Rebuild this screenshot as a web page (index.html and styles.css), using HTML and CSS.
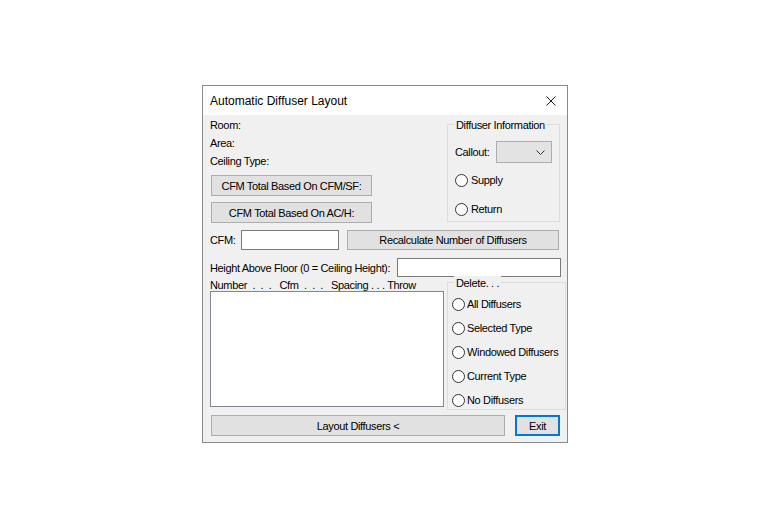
FILE: index.html
```html
<!DOCTYPE html>
<html>
<head>
<meta charset="utf-8">
<title>Automatic Diffuser Layout</title>
<link rel="stylesheet" href="styles.css">
</head>
<body>
<div class="page">
  <div class="dialog">
    <div class="titlebar">
      <span class="title">Automatic Diffuser Layout</span>
      <svg class="close" width="10" height="10" viewBox="0 0 10 10"><path d="M0.5 0.5 L9.5 9.5 M9.5 0.5 L0.5 9.5" stroke="#1a1a1a" stroke-width="1" fill="none"/></svg>
    </div>
    <div class="body">
      <div class="top">
        <div class="left-col">
          <div class="line">Room:</div>
          <div class="line">Area:</div>
          <div class="line">Ceiling Type:</div>
          <div class="btn btn-calc first">CFM Total Based On CFM/SF:</div>
          <div class="btn btn-calc second">CFM Total Based On AC/H:</div>
        </div>
        <div class="group group-info">
          <div class="group-title">Diffuser Information</div>
          <div class="callout-row">
            <span>Callout:</span>
            <div class="combo">
              <svg class="chevron" width="9" height="5" viewBox="0 0 9 5"><path d="M0.5 0.5 L4.5 4.5 L8.5 0.5" stroke="#333" stroke-width="1" fill="none"/></svg>
            </div>
          </div>
          <div class="radio-row supply"><span class="radio"></span><span>Supply</span></div>
          <div class="radio-row ret"><span class="radio"></span><span>Return</span></div>
        </div>
      </div>

      <div class="cfm-row">
        <span class="cfm-label">CFM:</span>
        <div class="textbox cfm-box"></div>
        <div class="btn recalc">Recalculate Number of Diffusers</div>
      </div>

      <div class="height-row">
        <span class="height-label">Height Above Floor (0 = Ceiling Height):</span>
        <div class="textbox height-box"></div>
      </div>

      <div class="bottom">
        <div class="list-col">
          <div class="list-header">Number  .  .  .   Cfm  .  .  .   Spacing . . . Throw</div>
          <div class="listbox"></div>
        </div>
        <div class="group group-delete">
          <div class="group-title">Delete. . .</div>
          <div class="radio-row del first-del"><span class="radio"></span><span>All Diffusers</span></div>
          <div class="radio-row del"><span class="radio"></span><span>Selected Type</span></div>
          <div class="radio-row del"><span class="radio"></span><span>Windowed Diffusers</span></div>
          <div class="radio-row del"><span class="radio"></span><span>Current Type</span></div>
          <div class="radio-row del"><span class="radio"></span><span>No Diffusers</span></div>
        </div>
      </div>

      <div class="actions">
        <div class="btn layout-btn">Layout Diffusers &lt;</div>
        <div class="btn exit-btn">Exit</div>
      </div>
    </div>
  </div>
</div>
</body>
</html>
```
FILE: styles.css
```css
* { box-sizing: border-box; }
html, body { margin: 0; padding: 0; background: #ffffff; }
body { width: 768px; height: 528px; overflow: hidden; }

.page { padding: 85px 0 0 202px; }

.dialog {
  width: 366px;
  border: 1px solid #8a8a8a;
  background: #f0f0f0;
  font-family: "Liberation Sans", Arial, sans-serif;
  font-size: 11px;
  letter-spacing: -0.35px;
  color: #000;
}

.titlebar {
  height: 29px;
  background: #ffffff;
  display: flex;
  align-items: center;
  padding: 0 11px 0 7px;
}
.title {
  font-size: 12px;
  letter-spacing: 0;
  color: #000;
  flex: 1;
}
.close { display: block; margin-top: 1px; }

.body { padding: 1px 0 6px 7px; height: 327px; }

.top { display: flex; align-items: flex-start; }
.left-col { width: 237px; }
.line { height: 18px; line-height: 18px; }

.btn {
  display: flex;
  align-items: center;
  justify-content: center;
  background: #e1e1e1;
  border: 1px solid #adadad;
  white-space: nowrap;
}
.btn-calc { width: 161px; height: 21px; margin-left: 1px; }
.btn-calc.first { margin-top: 5px; }
.btn-calc.second { margin-top: 6px; }

.group {
  border: 1px solid #dcdcdc;
}
.group-title {
  width: fit-content;
  margin: -7px 0 0 6px;
  padding: 0 2px;
  height: 14px;
  line-height: 14px;
  background: #f0f0f0;
}
.group-info {
  width: 113px;
  height: 98px;
  margin-top: 8px;
}
.callout-row {
  display: flex;
  align-items: center;
  justify-content: space-between;
  height: 22px;
  margin-top: 9px;
  padding: 0 7px;
}
.combo {
  width: 56px;
  height: 22px;
  background: #e3e3e3;
  border: 1px solid #adadad;
  display: flex;
  align-items: center;
  justify-content: flex-end;
  padding-right: 6px;
}
.chevron { display: block; }

.radio-row {
  display: flex;
  align-items: center;
  height: 20px;
  padding-left: 7px;
}
.radio {
  width: 13px;
  height: 13px;
  border: 1px solid #333;
  border-radius: 50%;
  background: #fff;
  margin-right: 3px;
  flex: none;
}
.radio-row.supply { margin-top: 7px; }
.radio-row.ret { margin-top: 9px; }

.cfm-row {
  display: flex;
  align-items: center;
  height: 22px;
  margin-top: 6px;
}
.cfm-label { width: 31px; }
.textbox {
  background: #fff;
  border: 1px solid #7a7a7a;
}
.cfm-box { width: 98px; height: 20px; }
.recalc { width: 212px; height: 20px; margin-left: 8px; }

.height-row {
  display: flex;
  align-items: center;
  height: 19px;
  margin-top: 7px;
}
.height-label { width: 187px; white-space: nowrap; }
.height-box { width: 164px; height: 19px; }

.bottom { display: flex; align-items: flex-start; }
.list-col { width: 234px; }
.list-header {
  margin-top: 3px;
  height: 11px;
  line-height: 11px;
  white-space: pre;
}
.listbox {
  width: 234px;
  height: 116px;
  background: #fff;
  border: 1px solid #828790;
}
.group-delete {
  width: 119px;
  height: 128px;
  margin: 5px 0 0 3px;
}
.radio-row.del { height: 16px; padding-left: 4px; margin-top: 8px; }
.radio-row.del .radio { margin-right: 2px; }
.radio-row.first-del { margin-top: 6px; }

.actions { display: flex; margin-top: 5px; }
.layout-btn { width: 294px; height: 21px; margin-left: 1px; }
.exit-btn {
  width: 45px;
  height: 21px;
  margin-left: 10px;
  border: 2px solid #0078d7;
}
```
